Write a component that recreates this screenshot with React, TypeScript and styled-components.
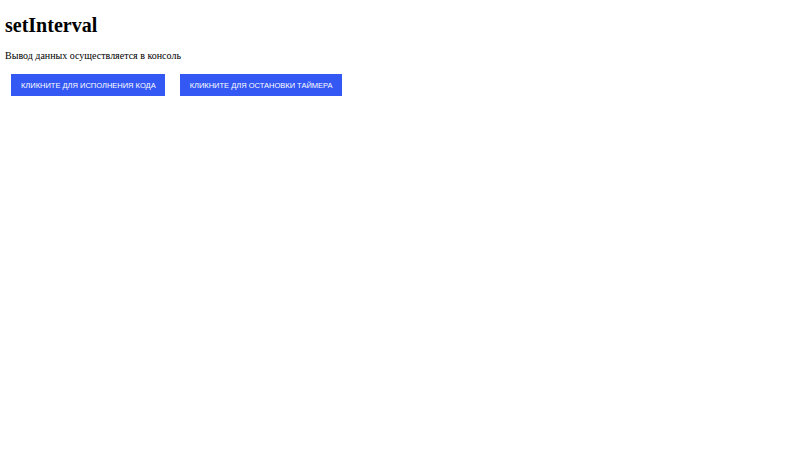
import React from 'react'
import styled, {createGlobalStyle} from 'styled-components'

const Global = createGlobalStyle`
    body {
        margin: 5px;
        font-family: "Liberation Serif", "Times New Roman", serif;
        background: #fff;
        color: #000;
    }
`

const App = () => {
  return (
    <>
        <Global />
        <Container>
            <Title>setInterval</Title>
            <Text>Вывод данных осуществляется в консоль</Text>
            <Buttons>
                <Button>Кликните для исполнения кода</Button>
                <Button>Кликните для остановки таймера</Button>
            </Buttons>
        </Container>
    </>
  )
}

export default App

const Container = styled.div`
    display: flex;
    flex-direction: column;
`

const Title = styled.h1`
    font-size: 20px;
    font-weight: bold;
    margin: 9px 0 13px;
    line-height: 23px;
`

const Text = styled.p`
    font-size: 10px;
    margin: 0 0 12px;
    line-height: 12px;
`

const Buttons = styled.div`
    display: flex;
    gap: 15px;
    padding-left: 6px;
`

const Button = styled.button`
    height: 22px;
    padding: 0 9px 0 10px;
    border: none;
    border-radius: 0;
    background-color: #3358f4;
    color: #fff;
    font-family: "Liberation Sans", Arial, sans-serif;
    font-size: 7.5px;
    font-weight: 400;
    text-transform: uppercase;
    cursor: pointer;
`
